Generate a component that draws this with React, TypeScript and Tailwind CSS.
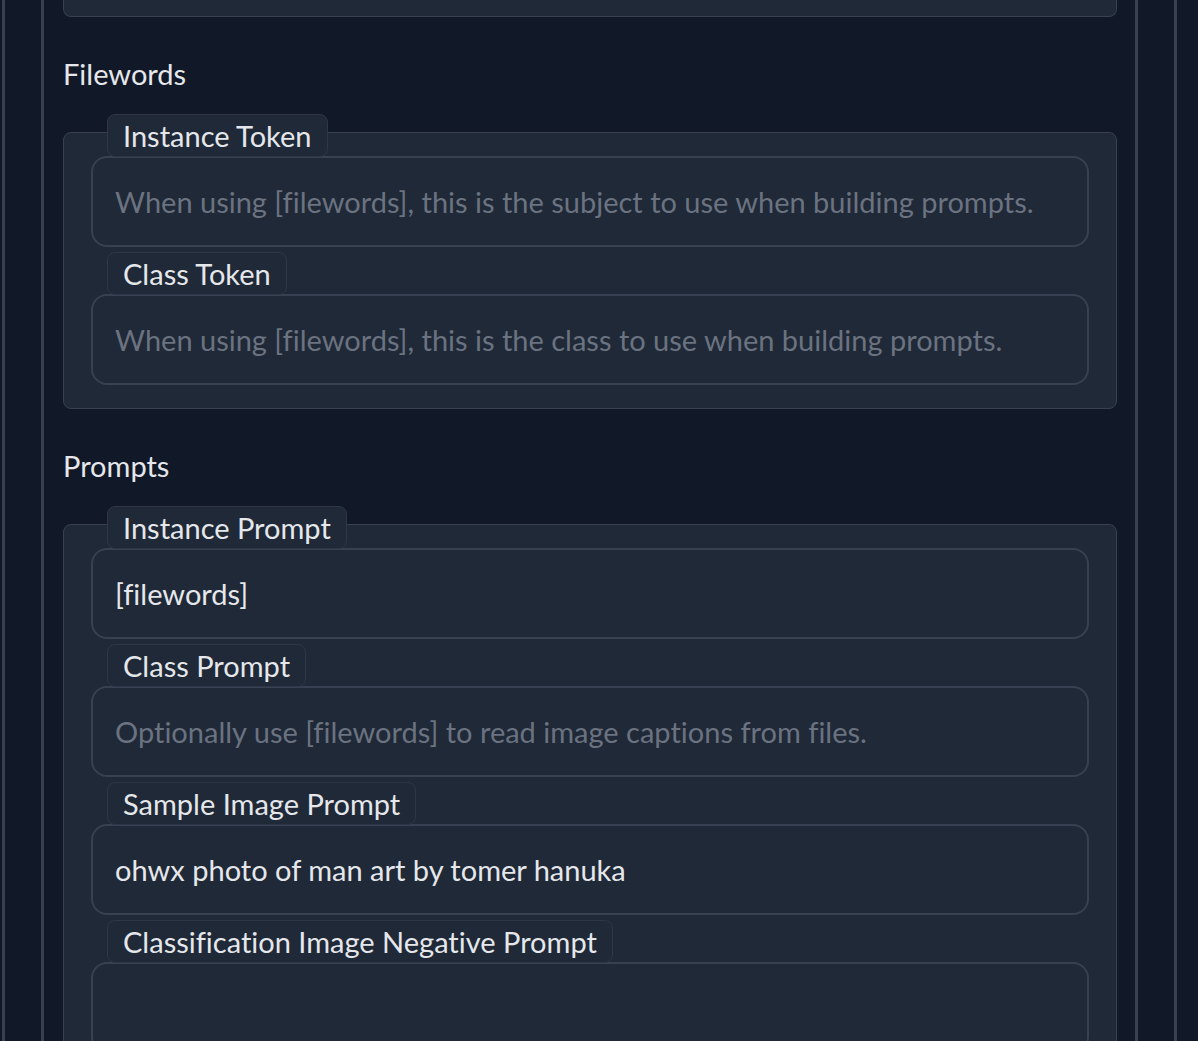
const font = { fontFamily: "Lato, 'Noto Sans', sans-serif", fontVariantLigatures: "none" as const };

interface FieldProps {
  label: string;
  value?: string;
  placeholder?: string;
}

const Field = ({ label, value, placeholder }: FieldProps) => (
  <div className="flex flex-col">
    <div className="ml-4 self-start h-[43px] px-[15px] flex items-center rounded-lg border border-[#2d3748] bg-[#1f2937] text-[29px] text-[#e5e7eb] relative z-10">
      {label}
    </div>
    <div className="-mt-px h-[91px] rounded-2xl border-2 border-[#374151] bg-[#1f2937] px-[22px] flex items-center text-[29px]">
      {value ? (
        <span className="text-[#e5e7eb]">{value}</span>
      ) : (
        <span className="text-[#6b7280]">{placeholder}</span>
      )}
    </div>
  </div>
);

const Section = ({ title, children }: { title: string; children: React.ReactNode }) => (
  <div className="flex flex-col">
    <div className="h-[115px] flex items-end pb-[37px] text-[29px] text-[#e5e7eb]">{title}</div>
    <div className="-mt-[18px]">
      <div className="relative">
        <div className="absolute inset-x-0 top-[18px] bottom-0 rounded-lg border border-[#374151] bg-[#1f2937]" />
        <div className="relative flex flex-col gap-[5px] px-7 pb-6">{children}</div>
      </div>
    </div>
  </div>
);

export default function App() {
  return (
    <div className="w-[1198px] h-[1041px] overflow-hidden bg-[#111827] pl-[2px]" style={font}>
      <div className="w-[1175px] h-full border-x-[3px] border-[#374151] pl-[36px] pr-[36px]">
        <div className="h-full border-x-[3px] border-[#374151] pl-[19px] pr-[18px]">
          <div className="h-[17px] rounded-b-lg border border-t-0 border-[#374151] bg-[#1f2937]" />
          <Section title="Filewords">
            <Field
              label="Instance Token"
              placeholder="When using [filewords], this is the subject to use when building prompts."
            />
            <Field
              label="Class Token"
              placeholder="When using [filewords], this is the class to use when building prompts."
            />
          </Section>
          <Section title="Prompts">
            <Field label="Instance Prompt" value="[filewords]" />
            <Field
              label="Class Prompt"
              placeholder="Optionally use [filewords] to read image captions from files."
            />
            <Field label="Sample Image Prompt" value="ohwx photo of man art by tomer hanuka" />
            <Field label="Classification Image Negative Prompt" />
          </Section>
        </div>
      </div>
    </div>
  );
}
